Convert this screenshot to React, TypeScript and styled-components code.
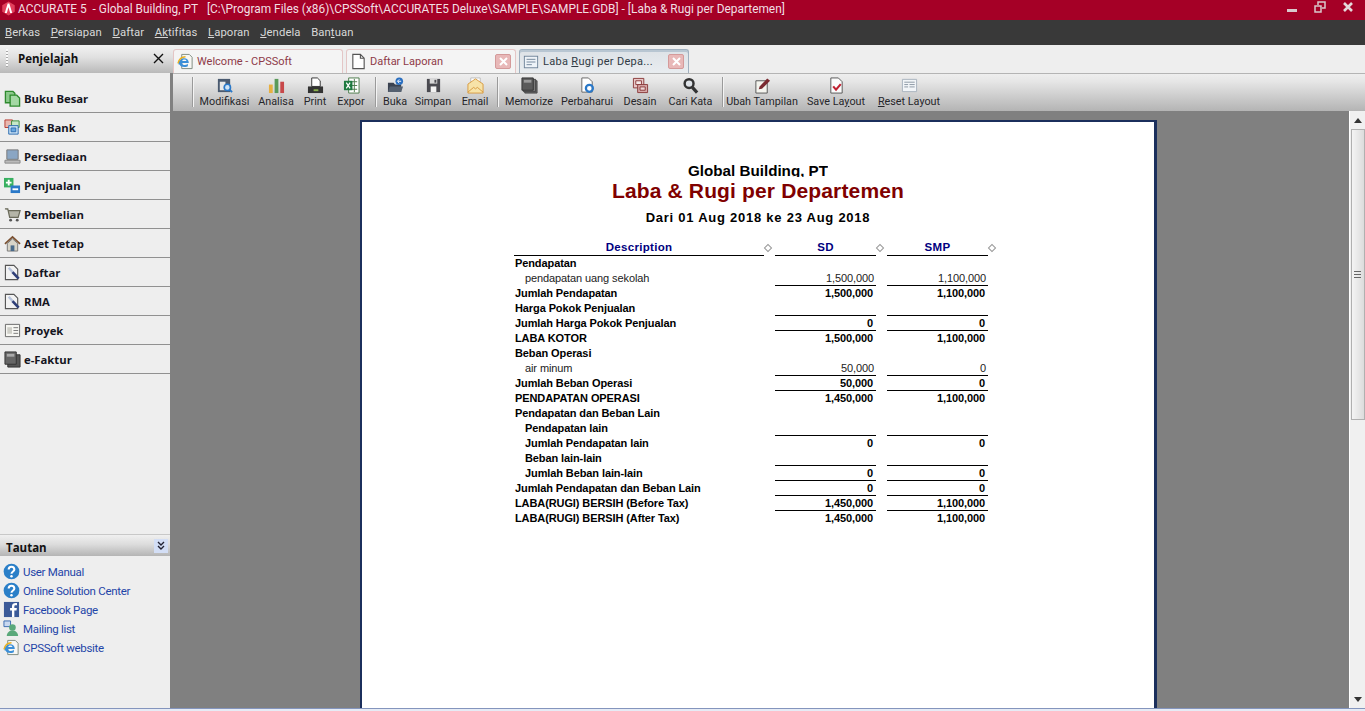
import { FC, ReactNode } from "react";
import styled, { createGlobalStyle } from "styled-components";

const GlobalStyle = createGlobalStyle`
	html, body {
		margin: 0;
		padding: 0;
		overflow: hidden;
		background: #808080;
	}
	* {
		box-sizing: border-box;
	}
`;

const UI_FONT = `Roboto, "Open Sans", "Liberation Sans", sans-serif`;
const NAV_FONT = `"Open Sans", "Noto Sans", "Liberation Sans", sans-serif`;
const REPORT_FONT = `"Liberation Sans", Arial, sans-serif`;

/* ---------- icons ---------- */

const Svg: FC<{ size?: number; children: ReactNode }> = ({ size = 18, children }) => (
	<svg width={size} height={size} viewBox="0 0 18 18" fill="none">
		{children}
	</svg>
);

const icons: Record<string, ReactNode> = {
	logo: (
		<>
			<path d="M9 .5 16.500 5v8L9 17.500 1.500 13V5z" fill="#e2405c" />
			<path d="M4.500 14.500 8 3h2l3.500 11.500H11L9 7.500 7 14.500z" fill="#fff" />
		</>
	),
	ie: (
		<>
			<path d="M5 1.500h8l3 3v12H5z" fill="#f7f7f4" stroke="#7d8a80" />
			<path d="M1.500 12c0-4 3-6.500 6-6.500s5 2 5 5H5.500c0 2.500 3.500 3 6 1v2.500c-4 2-8 .5-8.500-1.500" fill="#3b8fd8" />
			<path d="M5.500 8.500H10c-.5-2-4-2-4.500 0z" fill="#f7f7f4" />
			<path d="M1 11c1-4 4-7 8-7" stroke="#e8b020" strokeWidth="1.500" />
		</>
	),
	page: <path d="M3 1.500h8l4 4v11H3zM11 1.500v4h4" fill="#fff" stroke="#555" strokeWidth="1.200" />,
	report: (
		<>
			<rect x="1.500" y="2.500" width="15" height="13" fill="#eef3f8" stroke="#6a7f95" />
			<path d="M4 6h10M4 9h10M4 12h6" stroke="#6a7f95" />
		</>
	),
	modifikasi: (
		<>
			<path d="M2 2h13v14H2z" fill="#4a5a70" />
			<path d="M4 5h6v9H4z" fill="#e8e8e8" />
			<circle cx="12" cy="11" r="3.300" fill="#cfe4f7" stroke="#2a78c8" strokeWidth="1.800" />
			<path d="m14.500 13.500 2.500 2.500" stroke="#2a78c8" strokeWidth="2" />
		</>
	),
	analisa: (
		<>
			<path d="M1 8h4v9H1z" fill="#e8b040" />
			<path d="M7 2h4v15H7z" fill="#5a9a5a" />
			<path d="M13 5h4v12h-4z" fill="#c8484a" />
		</>
	),
	print: (
		<>
			<path d="M5 1h6l3 3v6H5z" fill="#fff" stroke="#333" />
			<path d="M1 10h16v7H1z" fill="#333" />
			<path d="M7 13h5v2H7z" fill="#8ab04a" />
		</>
	),
	expor: (
		<>
			<path d="M6 1h11v16H6z" fill="#fff" stroke="#4a7a4a" />
			<path d="M9 5h6M9 9h6M9 13h6M12 2v14" stroke="#4a7a4a" />
			<path d="M1 4h9v10H1z" fill="#1e7a40" />
			<path d="m3.500 6 4 6m0-6-4 6" stroke="#fff" strokeWidth="1.300" />
		</>
	),
	buka: (
		<>
			<path d="M1 6h6l1.500 2H15v8H1z" fill="#3a4250" />
			<path d="M3 10h14l-2 6H1z" fill="#55606f" />
			<circle cx="13" cy="4.500" r="4" fill="#2a6fc0" />
			<path d="M15 4.500h-3.500m1.500-2-2 2 2 2" stroke="#fff" />
		</>
	),
	simpan: (
		<>
			<path d="M2 2h14v14H2z" fill="#4a4a50" />
			<path d="M5 2h8v5H5z" fill="#d8d8d8" />
			<path d="M6 10h6v6H6z" fill="#f2f2f2" />
			<path d="M10 3h2v3h-2z" fill="#4a4a50" />
		</>
	),
	email: (
		<>
			<path d="M4 1h10v10H4z" fill="#fff" stroke="#bbb" />
			<path d="M1 7.500 9 2l8 5.500V17H1z" fill="#f7e3a8" stroke="#d89a40" />
			<path d="m1 16 6-5 2 1.500 2-1.500 6 5" stroke="#d89a40" />
		</>
	),
	memorize: (
		<>
			<path d="M4 4h13v13H4z" fill="#6a6a6a" stroke="#444" />
			<path d="M2.500 2.500h13v13h-13z" fill="#7a7a7a" stroke="#444" />
			<path d="M1 1h12v13H1z" fill="#5a5a5a" stroke="#333" />
			<path d="M3 3h8v3H3z" fill="#9a9a9a" />
		</>
	),
	perbaharui: (
		<>
			<path d="M3 1h7l4 4v11H3z" fill="#fff" stroke="#666" />
			<circle cx="11" cy="12" r="3.700" stroke="#2a78c8" strokeWidth="2.400" />
		</>
	),
	desain: (
		<>
			<path d="M1.500 1.500h11v10h-11z" fill="#e8c8c8" stroke="#8a3a3a" />
			<path d="M4 4h6v4H4z" fill="#f5eaea" stroke="#8a3a3a" />
			<path d="M6 8h10.500v8.500H6z" fill="#d8a8a8" stroke="#8a3a3a" />
			<path d="M8.500 10.500h5.500v3.500H8.500z" fill="#eed8d8" stroke="#8a3a3a" />
		</>
	),
	cari: (
		<>
			<circle cx="7.500" cy="7" r="4.700" fill="#dfe3e8" stroke="#333" strokeWidth="2.600" />
			<path d="m11 11 5 5.500" stroke="#333" strokeWidth="3.400" />
		</>
	),
	ubah: (
		<>
			<path d="M2 4h12v13H2z" fill="#f4f4ee" stroke="#555" />
			<path d="m5 13 1-3 8-8.500 3 2.500-8.500 8.500z" fill="#7a2a30" />
		</>
	),
	save: (
		<>
			<path d="M3 1h8l4 4v12H3z" fill="#fbfbfb" stroke="#555" />
			<path d="m5.500 10 3 3.500 5-6" stroke="#c02030" strokeWidth="2.200" />
		</>
	),
	reset: (
		<>
			<path d="M1.500 2.500h15v13h-15z" fill="#f2f5f8" stroke="#a8b2bd" />
			<path d="M3.500 5.500h11M3.500 8h4M9 8h5.500M3.500 10.500h4M9 10.500h5.500" stroke="#8a96a3" />
		</>
	),
	bukuBesar: (
		<>
			<path d="M1.500 1.500h8l2 2v10h-10z" fill="#8cc98c" stroke="#2e8a2e" strokeWidth="1.400" />
			<path d="M6.500 5.500h7l3 3v8.500h-10z" fill="#a4d8a4" stroke="#2e8a2e" strokeWidth="1.400" />
		</>
	),
	kasBank: (
		<>
			<path d="M1 1h8v8H1z" fill="#e8b8b0" stroke="#b83a30" />
			<path d="M8 2h8v7H8z" fill="#c8e8c8" stroke="#3a8a3a" />
			<path d="M5 7h10v9H5z" fill="#c8e0f4" stroke="#2a6ab0" />
			<path d="M7.500 9.500h5v4h-5z" fill="#6aa8e0" stroke="#2a6ab0" />
		</>
	),
	persediaan: (
		<>
			<path d="M3 2h12v10H3z" fill="#8aa6c4" stroke="#777" />
			<path d="M1 13h16v3H1z" fill="#bbb" stroke="#888" />
		</>
	),
	penjualan: (
		<>
			<path d="M0 1h10v10H0z" fill="#38b060" />
			<path d="M5 3v6M2 6h6" stroke="#fff" strokeWidth="2" />
			<path d="M7 9h10v8H7z" fill="#2a78c8" />
			<path d="M9 13h6" stroke="#fff" strokeWidth="2" />
		</>
	),
	pembelian: (
		<>
			<path d="M1 3h3l2 9h9l2-7H5" fill="#b5b5a8" stroke="#6a6a5a" strokeWidth="1.300" />
			<circle cx="7" cy="15" r="1.500" fill="#555" />
			<circle cx="14" cy="15" r="1.500" fill="#555" />
		</>
	),
	aset: (
		<>
			<path d="M1 9.500 9 2l8 7.500" stroke="#7a5030" strokeWidth="1.800" />
			<path d="M3.500 9 9 4l5.500 5v8h-11z" fill="#d8d4c8" stroke="#777" />
			<path d="M7 11h4v6H7z" fill="#4a6a8a" />
		</>
	),
	daftar: (
		<>
			<path d="M1.500 1.500h9l4 4v11h-13z" fill="#f2f2f2" stroke="#555" strokeWidth="1.200" />
			<path d="m5 4 4 4.500" stroke="#b8c4dc" strokeWidth="2.600" />
			<path d="m9 8.500 6.500 7" stroke="#2f3f78" strokeWidth="2.800" />
		</>
	),
	proyek: (
		<>
			<path d="M1.500 2.500h15v13h-15z" fill="#f6f6f2" stroke="#666" />
			<path d="M3.500 5.500h5v7h-5z" fill="#cfcfc8" />
			<path d="M10 6h5M10 9h5M10 12h5" stroke="#777" />
		</>
	),
	faktur: (
		<>
			<path d="M4 4h13v13H4z" fill="#555" stroke="#333" />
			<path d="M1 1h12v13H1z" fill="#666" stroke="#333" />
			<path d="M3 3h8v3H3z" fill="#aaa" />
		</>
	),
	help: (
		<>
			<circle cx="9" cy="9" r="8.300" fill="#2a7fc8" />
			<path d="M6 7c0-4 6-4 6 0 0 2-3 2-3 4.500" stroke="#fff" strokeWidth="2.200" />
			<circle cx="9" cy="14" r="1.300" fill="#fff" />
		</>
	),
	facebook: (
		<>
			<path d="M1 1h16v16H1z" fill="#3b5a98" />
			<path d="M12 17v-7h2.300l.4-2.500H12V6c0-1 .4-1.500 1.500-1.500h1.300V2.200C12 1.800 9.500 2.500 9.500 5.500v2H7.500V10h2v7z" fill="#fff" />
		</>
	),
	mailing: (
		<>
			<path d="M1 1h7v6H1z" fill="#c8d8f0" stroke="#3a6ab0" />
			<circle cx="10" cy="8" r="3.500" fill="#5aa87a" />
			<path d="M4 17c0-4 3-6 6-6s6 2 6 6z" fill="#5aa87a" />
		</>
	),
};

const Icon: FC<{ name: string; size?: number }> = ({ name, size }) => <Svg size={size}>{icons[name]}</Svg>;

/* ---------- data ---------- */

const menus: [string, string, string][] = [
	["", "B", "erkas"],
	["", "P", "ersiapan"],
	["", "D", "aftar"],
	["", "Ak", "tifitas"],
	["", "L", "aporan"],
	["", "J", "endela"],
	["Ban", "t", "uan"],
];

const tools: ({ label: ReactNode; icon: string; w: number } | "sep")[] = [
	"sep",
	{ label: "Modifikasi", icon: "modifikasi", w: 55 },
	{ label: "Analisa", icon: "analisa", w: 48 },
	{ label: "Print", icon: "print", w: 30 },
	{ label: "Expor", icon: "expor", w: 42 },
	"sep",
	{ label: "Buka", icon: "buka", w: 30 },
	{ label: "Simpan", icon: "simpan", w: 46 },
	{ label: "Email", icon: "email", w: 38 },
	"sep",
	{ label: "Memorize", icon: "memorize", w: 54 },
	{ label: "Perbaharui", icon: "perbaharui", w: 62 },
	{ label: "Desain", icon: "desain", w: 44 },
	{ label: "Cari Kata", icon: "cari", w: 57 },
	"sep",
	{ label: "Ubah Tampilan", icon: "ubah", w: 70 },
	{ label: <>Save La<u>y</u>out</>, icon: "save", w: 78 },
	{ label: <><u>R</u>eset Layout</>, icon: "reset", w: 68 },
];

const navItems: [string, string][] = [
	["Buku Besar", "bukuBesar"],
	["Kas Bank", "kasBank"],
	["Persediaan", "persediaan"],
	["Penjualan", "penjualan"],
	["Pembelian", "pembelian"],
	["Aset Tetap", "aset"],
	["Daftar", "daftar"],
	["RMA", "daftar"],
	["Proyek", "proyek"],
	["e-Faktur", "faktur"],
];

const links: [string, string][] = [
	["User Manual", "help"],
	["Online Solution Center", "help"],
	["Facebook Page", "facebook"],
	["Mailing list", "mailing"],
	["CPSSoft website", "ie"],
];

interface IRow {
	label: string;
	sd?: string;
	smp?: string;
	bold?: boolean;
	indent?: boolean;
	line?: boolean;
}

const rows: IRow[] = [
	{ label: "Pendapatan", bold: true },
	{ label: "pendapatan uang sekolah", sd: "1,500,000", smp: "1,100,000", indent: true, line: true },
	{ label: "Jumlah Pendapatan", sd: "1,500,000", smp: "1,100,000", bold: true },
	{ label: "Harga Pokok Penjualan", bold: true, line: true },
	{ label: "Jumlah Harga Pokok Penjualan", sd: "0", smp: "0", bold: true, line: true },
	{ label: "LABA KOTOR", sd: "1,500,000", smp: "1,100,000", bold: true },
	{ label: "Beban Operasi", bold: true },
	{ label: "air minum", sd: "50,000", smp: "0", indent: true, line: true },
	{ label: "Jumlah Beban Operasi", sd: "50,000", smp: "0", bold: true, line: true },
	{ label: "PENDAPATAN OPERASI", sd: "1,450,000", smp: "1,100,000", bold: true },
	{ label: "Pendapatan dan Beban Lain", bold: true },
	{ label: "Pendapatan lain", bold: true, indent: true, line: true },
	{ label: "Jumlah Pendapatan lain", sd: "0", smp: "0", bold: true, indent: true },
	{ label: "Beban lain-lain", bold: true, indent: true, line: true },
	{ label: "Jumlah Beban lain-lain", sd: "0", smp: "0", bold: true, indent: true, line: true },
	{ label: "Jumlah Pendapatan dan Beban Lain", sd: "0", smp: "0", bold: true, line: true },
	{ label: "LABA(RUGI) BERSIH (Before Tax)", sd: "1,450,000", smp: "1,100,000", bold: true, line: true },
	{ label: "LABA(RUGI) BERSIH (After Tax)", sd: "1,450,000", smp: "1,100,000", bold: true },
];

/* ---------- page ---------- */

const App: FC = () => (
	<AppStyled>
		<GlobalStyle />
		<TitleBar>
			<Icon name="logo" size={15} />
			<TitleText>
				ACCURATE 5&nbsp; - Global Building, PT&nbsp;&nbsp; [C:\Program Files (x86)\CPSSoft\ACCURATE5 Deluxe\SAMPLE\SAMPLE.GDB] - [Laba &amp; Rugi per Departemen]
			</TitleText>
			<WindowButtons>
				<svg width="12" height="12" viewBox="0 0 12 12">
					<path d="M1 8h10v3H1z" fill="#d9c8cc" />
				</svg>
				<svg width="12" height="12" viewBox="0 0 12 12" fill="none" stroke="#d9c8cc" strokeWidth="1.500">
					<path d="M1 5h6v6H1zM4 4V1h7v6H8" />
				</svg>
				<svg width="12" height="12" viewBox="0 0 12 12" stroke="#e4d8da" strokeWidth="2.600">
					<path d="m2 2 8 8m0-8-8 8" />
				</svg>
			</WindowButtons>
		</TitleBar>

		<MenuBar>
			{menus.map(([before, key, after]) => (
				<MenuItem key={before + key + after}>
					{before}
					<u>{key}</u>
					{after}
				</MenuItem>
			))}
		</MenuBar>

		<Main>
			<Sidebar>
				<PanelHeader>
					<Grip />
					<PanelTitle>Penjelajah</PanelTitle>
					<PanelClose>
						<svg width="11" height="11" viewBox="0 0 11 11" stroke="#111" strokeWidth="1.400">
							<path d="m1 1 9 9m0-9-9 9" />
						</svg>
					</PanelClose>
				</PanelHeader>
				<NavList>
					{navItems.map(([label, icon]) => (
						<NavItem key={label}>
							<Icon name={icon} size={17} />
							<span>{label}</span>
						</NavItem>
					))}
				</NavList>
				<LinksPanel>
					<LinksHeader>
						<span>Tautan</span>
						<Collapse>
							<svg width="10" height="10" viewBox="0 0 10 10" fill="none" stroke="#223" strokeWidth="1.400">
								<path d="m2 1 3 3 3-3M2 5l3 3 3-3" />
							</svg>
						</Collapse>
					</LinksHeader>
					<LinkList>
						{links.map(([label, icon]) => (
							<LinkItem key={label}>
								<Icon name={icon} size={17} />
								<span>{label}</span>
							</LinkItem>
						))}
					</LinkList>
				</LinksPanel>
			</Sidebar>

			<Content>
				<TabStrip>
					<Tab>
						<Icon name="ie" size={17} />
						<TabLabel>Welcome - CPSSoft</TabLabel>
					</Tab>
					<Tab>
						<Icon name="page" size={17} />
						<TabLabel>Daftar Laporan</TabLabel>
						<TabClose>
							<CloseGlyph />
						</TabClose>
					</Tab>
					<Tab $active>
						<Icon name="report" size={16} />
						<TabLabel $active>
							Laba <u>R</u>ugi per Depa...
						</TabLabel>
						<TabClose>
							<CloseGlyph />
						</TabClose>
					</Tab>
				</TabStrip>

				<Toolbar>
					{tools.map((tool, idx) =>
						tool === "sep" ? (
							<ToolSeparator key={idx} />
						) : (
							<ToolButton key={idx} $w={tool.w}>
								<Icon name={tool.icon} size={17} />
								<span>{tool.label}</span>
							</ToolButton>
						)
					)}
				</Toolbar>

				<Workspace>
					<PageArea>
						<ReportPage>
							<Company>Global Building, PT</Company>
							<ReportTitle>Laba &amp; Rugi per Departemen</ReportTitle>
							<ReportDate>Dari 01 Aug 2018 ke 23 Aug 2018</ReportDate>
							<ReportTable>
								<HeaderCell>Description</HeaderCell>
								<HeaderCell>SD</HeaderCell>
								<HeaderCell>SMP</HeaderCell>
								{rows.map((row) => (
									<RowGroup key={row.label}>
										<LabelCell $bold={row.bold} $indent={row.indent}>
											{row.label}
										</LabelCell>
										<ValueCell $bold={row.bold} $line={row.line}>
											{row.sd}
										</ValueCell>
										<ValueCell $bold={row.bold} $line={row.line}>
											{row.smp}
										</ValueCell>
									</RowGroup>
								))}
							</ReportTable>
						</ReportPage>
					</PageArea>
					<Scrollbar>
						<ScrollArrow>
							<svg width="8" height="5" viewBox="0 0 8 5">
								<path d="M4 0 8 5H0z" fill="#333" />
							</svg>
						</ScrollArrow>
						<ScrollThumb>
							<ThumbGrip />
						</ScrollThumb>
						<ScrollTrack />
						<ScrollArrow>
							<svg width="8" height="5" viewBox="0 0 8 5">
								<path d="M0 0h8L4 5z" fill="#333" />
							</svg>
						</ScrollArrow>
					</Scrollbar>
				</Workspace>
			</Content>
		</Main>
		<BottomEdge />
	</AppStyled>
);

export default App;

const CloseGlyph: FC = () => (
	<svg width="9" height="9" viewBox="0 0 9 9" stroke="#fff" strokeWidth="2">
		<path d="m1 1 7 7m0-7-7 7" />
	</svg>
);

const AppStyled = styled.div`
	width: 1365px;
	height: 711px;
	display: flex;
	flex-direction: column;
	overflow: hidden;
	font-family: ${UI_FONT};
`;

const TitleBar = styled.div`
	height: 20px;
	flex: none;
	display: flex;
	align-items: center;
	padding: 0 0 3px 1px;
	background: #a50026;
	color: #f1dfe3;
`;

const TitleText = styled.div`
	margin-left: 2px;
	font-size: 11.900px;
	white-space: pre;
`;

const WindowButtons = styled.div`
	margin-left: auto;
	display: flex;
	gap: 16px;
	padding-right: 11px;
	margin-bottom: 4px;
`;

const MenuBar = styled.div`
	height: 25px;
	flex: none;
	display: flex;
	align-items: center;
	gap: 10.500px;
	padding-left: 5px;
	background: #393939;
	color: #d8d8d8;
	font-size: 11.300px;
`;

const MenuItem = styled.span`
	letter-spacing: 0.100px;
`;

const Main = styled.div`
	flex: 1;
	min-height: 0;
	display: flex;
`;

const Sidebar = styled.div`
	width: 173px;
	flex: none;
	display: flex;
	flex-direction: column;
	background: #eeeeee;
	border-right: 3px solid #808080;
`;

const PanelHeader = styled.div`
	width: calc(100% + 3px);
	height: 28px;
	flex: none;
	display: flex;
	align-items: center;
	padding: 0 6px 2px 6px;
	background: linear-gradient(#f2f2f2, #e0e0e0 45%, #b9b9b9);
	font-family: ${NAV_FONT};
`;

const Grip = styled.div`
	width: 2px;
	height: 18px;
	background: repeating-linear-gradient(#fafafa 0 2px, #a8a8a8 2px 3px);
`;

const PanelTitle = styled.div`
	margin-left: 10px;
	font-size: 11.500px;
	font-weight: 700;
	color: #111;
`;

const PanelClose = styled.div`
	margin-left: auto;
	margin-right: 3px;
	display: flex;
`;

const NavList = styled.div`
	padding-top: 11px;
`;

const NavItem = styled.div`
	height: 29px;
	display: flex;
	align-items: center;
	gap: 3px;
	padding: 0 0 0 4px;
	border-bottom: 1px solid #909090;
	font-family: ${NAV_FONT};
	font-size: 11.300px;
	font-weight: 700;
	color: #15151f;

	svg {
		flex: none;
	}
`;

const LinksPanel = styled.div`
	margin-top: auto;
	height: 174px;
	flex: none;
`;

const LinksHeader = styled.div`
	height: 22px;
	display: flex;
	align-items: center;
	justify-content: space-between;
	padding: 3px 2px 0 6px;
	border-top: 1px solid #c8c8c8;
	background: linear-gradient(#f0f0f0, #dcdcdc 45%, #b4b4b4);
	font-family: ${NAV_FONT};
	font-size: 11.500px;
	font-weight: 700;
	color: #111;
`;

const Collapse = styled.div`
	width: 14px;
	height: 14px;
	display: flex;
	align-items: center;
	justify-content: center;
	background: #d3def5;
	margin-top: -3px;
`;

const LinkList = styled.div`
	padding: 6px 0 0 3px;
`;

const LinkItem = styled.div`
	height: 19px;
	display: flex;
	align-items: center;
	gap: 3px;
	font-size: 11.500px;
	letter-spacing: -0.300px;
	color: #1f45a8;
`;

const Content = styled.div`
	flex: 1;
	min-width: 0;
	display: flex;
	flex-direction: column;
`;

const TabStrip = styled.div`
	height: 29px;
	flex: none;
	display: flex;
	align-items: flex-end;
	gap: 3px;
	padding-top: 5px;
	background: #eeeeee;
	border-bottom: 1px solid #b4b4b4;
`;

const Tab = styled.div<{ $active?: boolean }>`
	width: 170px;
	height: 24px;
	display: flex;
	align-items: center;
	padding: 0 4px 0 3px;
	border: 1px solid ${({ $active }) => ($active ? "#9fb0bf" : "#e4c6c6")};
	border-bottom: none;
	border-radius: 3px 3px 0 0;
	background: ${({ $active }) => ($active ? "linear-gradient(#dde2e7, #e9edf0)" : "#f4f4f4")};
	box-shadow: ${({ $active }) => ($active ? "inset 0 2px 0 #b8c6d2" : "none")};
`;

const TabLabel = styled.span<{ $active?: boolean }>`
	margin-left: ${({ $active }) => ($active ? "4px" : "3px")};
	font-size: 11px;
	letter-spacing: ${({ $active }) => ($active ? "0.300px" : "0")};
	white-space: nowrap;
	color: ${({ $active }) => ($active ? "#303a44" : "#8e3a48")};
`;

const TabClose = styled.div`
	margin-left: auto;
	width: 16px;
	height: 15px;
	display: flex;
	align-items: center;
	justify-content: center;
	border: 1px solid #d49a9a;
	border-radius: 2px;
	background: #e8b8b8;
`;

const Toolbar = styled.div`
	height: 37px;
	flex: none;
	display: flex;
	align-items: stretch;
	padding: 3px 0 3px 16px;
	background: linear-gradient(#eeeeee, #e6e6e6 20%, #b4b4b4);
`;

const ToolSeparator = styled.div`
	width: 2px;
	margin: 0 3px 1px;
	background: linear-gradient(#c0c0c0, #dadada);
	border-left: 1px solid #9a9a9a;
	border-right: 1px solid #f4f4f4;
`;

const ToolButton = styled.div<{ $w: number }>`
	width: ${({ $w }) => $w}px;
	flex: none;
	display: flex;
	flex-direction: column;
	align-items: center;
	justify-content: space-between;
	font-size: 10.800px;
	line-height: 13px;
	color: #26262a;
	white-space: nowrap;
`;

const Workspace = styled.div`
	flex: 1;
	min-height: 0;
	display: flex;
	background: #808080;
`;

const PageArea = styled.div`
	flex: 1;
	min-width: 0;
	overflow: hidden;
	padding: 9px 0 0 187px;
`;

const ReportPage = styled.div`
	width: 797px;
	height: 640px;
	display: flex;
	flex-direction: column;
	align-items: center;
	padding-top: 40px;
	background: #fff;
	border: 2px solid #1b2f5c;
	border-right-width: 3px;
	font-family: ${REPORT_FONT};
`;

const Company = styled.div`
	height: 15px;
	overflow: hidden;
	font-size: 15.200px;
	line-height: 17px;
	font-weight: 700;
	color: #000;
`;

const ReportTitle = styled.div`
	margin-top: 2px;
	font-size: 21px;
	line-height: 24px;
	font-weight: 700;
	letter-spacing: 0.150px;
	color: #800000;
`;

const ReportDate = styled.div`
	margin-top: 7px;
	font-size: 13px;
	line-height: 16px;
	font-weight: 700;
	letter-spacing: 0.750px;
	color: #000;
`;

const ReportTable = styled.div`
	margin-top: 14px;
	display: grid;
	grid-template-columns: 250px 101px 101px;
	column-gap: 11px;
	align-self: flex-start;
	margin-left: 152px;
`;

const HeaderCell = styled.div`
	position: relative;
	height: 16px;
	text-align: center;
	font-size: 11.500px;
	line-height: 15px;
	font-weight: 700;
	letter-spacing: 0.300px;
	color: #000080;
	border-bottom: 1px solid #000;

	&::after {
		content: "";
		position: absolute;
		right: -7px;
		top: 5px;
		width: 4px;
		height: 4px;
		transform: rotate(45deg);
		border: 1px solid #999;
		background: #fff;
	}
`;

const RowGroup = styled.div`
	display: contents;
`;

const LabelCell = styled.div<{ $bold?: boolean; $indent?: boolean }>`
	height: 15px;
	padding-left: ${({ $indent }) => ($indent ? "11px" : "1px")};
	font-size: 11px;
	line-height: 15px;
	white-space: nowrap;
	letter-spacing: -0.100px;
	font-weight: ${({ $bold }) => ($bold ? 700 : 400)};
	color: ${({ $bold }) => ($bold ? "#000" : "#222")};
`;

const ValueCell = styled.div<{ $bold?: boolean; $line?: boolean }>`
	height: 15px;
	padding-right: ${({ $bold }) => ($bold ? "3px" : "2px")};
	text-align: right;
	font-size: 11px;
	line-height: 14px;
	letter-spacing: -0.100px;
	font-weight: ${({ $bold }) => ($bold ? 700 : 400)};
	color: ${({ $bold }) => ($bold ? "#000" : "#222")};
	border-bottom: 1px solid ${({ $line }) => ($line ? "#000" : "transparent")};
`;

const Scrollbar = styled.div`
	width: 16px;
	flex: none;
	display: flex;
	flex-direction: column;
	align-items: center;
	background: #f0f0f0;
	border-left: 1px solid #fff;
`;

const ScrollArrow = styled.div`
	width: 100%;
	height: 18px;
	flex: none;
	display: flex;
	align-items: center;
	justify-content: center;
`;

const ScrollThumb = styled.div`
	width: 14px;
	height: 291px;
	flex: none;
	display: flex;
	align-items: center;
	justify-content: center;
	border: 1px solid #b0b0b0;
	background: linear-gradient(90deg, #f4f4f4, #dcdcdc);
`;

const ThumbGrip = styled.div`
	width: 7px;
	height: 7px;
	background: repeating-linear-gradient(#666 0 1px, transparent 1px 3px);
`;

const ScrollTrack = styled.div`
	flex: 1;
`;

const BottomEdge = styled.div`
	height: 3px;
	flex: none;
	background: #e6ebf5;
	border-top: 1px solid #8495bd;
`;
